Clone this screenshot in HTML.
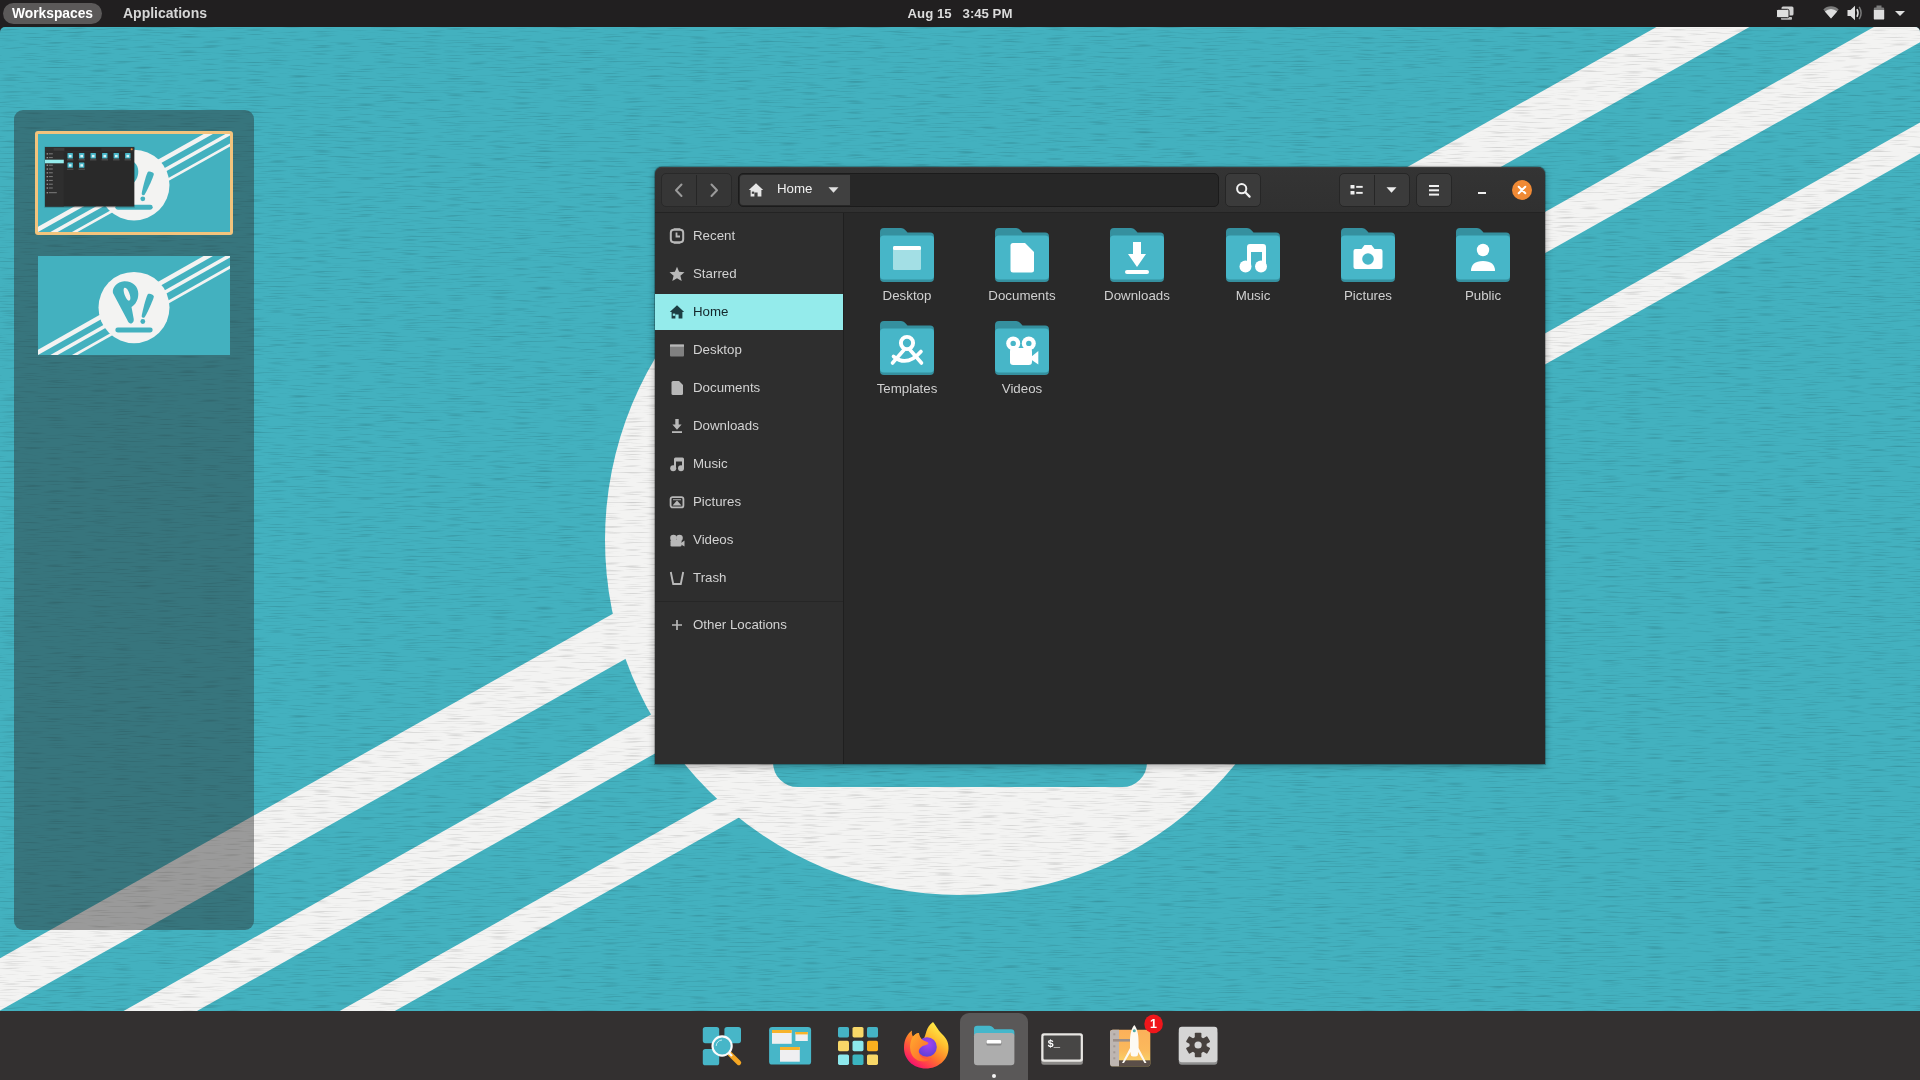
<!DOCTYPE html>
<html lang="en"><head><meta charset="utf-8"><title>Pop!_OS Desktop - Files</title>
<style>
*{box-sizing:border-box}
html,body{margin:0;padding:0}
body{width:1920px;height:1080px;overflow:hidden;position:relative;background:#211f20;font-family:"Liberation Sans",sans-serif;font-size:13.3px;color:#d2d2d2}
.abs{position:absolute}
#topbar{position:absolute;left:0;top:0;width:1920px;height:27px;background:#211f20;font-weight:700}
#ws,#apps,#clock,.fl,.srow span,.gt{will-change:transform}
#ws{position:absolute;left:3px;top:3px;width:99px;height:21px;border-radius:10.5px;background:#5b5959;color:#fff;font-size:13.8px;line-height:21px;text-align:center}
#apps{position:absolute;left:123px;top:3px;font-size:14px;line-height:21px;color:#d6d6d6}
#clock{position:absolute;left:860px;width:200px;top:3px;text-align:center;font-size:13.2px;line-height:21px;color:#dcdcdc;white-space:pre}
#wall{position:absolute;left:0;top:27px;width:1920px;height:984px;border-radius:5px 5px 0 0;overflow:hidden}
#wspanel{position:absolute;left:14px;top:110px;width:240px;height:820px;border-radius:9px;background:rgba(42,40,40,.44)}
#dock{position:absolute;left:0;top:1011px;width:1920px;height:69px;background:#333030}
#win{position:absolute;left:655px;top:167px;width:890px;height:597px;background:#292929;border-radius:7px 7px 0 0;box-shadow:0 0 0 1px rgba(0,0,0,.22),0 2px 7px rgba(0,0,0,.33)}
#hdr{position:absolute;left:0;top:0;width:890px;height:46px;background:linear-gradient(#343434,#303030);border-radius:7px 7px 0 0;border-bottom:1px solid #232323;box-shadow:inset 0 1px 0 rgba(255,255,255,.06)}
.btn{position:absolute;top:6px;height:34px;background:#3b3b3b;border:1px solid #262626;border-radius:5px}
#side{position:absolute;left:0;top:46px;width:189px;height:551px;background:#2e2e2e;border-right:1px solid #1f1f1f}
.srow{position:absolute;left:0;width:188px;height:18px;line-height:18px;white-space:nowrap}
.srow .si{position:absolute;left:14px;top:1px}
.srow span{position:absolute;left:38px;top:0}
.fi{position:absolute}
.fl{position:absolute;width:120px;text-align:center;line-height:16px;color:#d0d0d0;white-space:nowrap}
</style></head><body>
<svg width="0" height="0" style="position:absolute">
<symbol id="wp" viewBox="0 0 1920 1080" preserveAspectRatio="none">
<rect width="1920" height="1080" fill="#43b1bf"/>
<g fill="#f3f3f2">
<polygon points="-20.0,969.5 1940.0,-132.4 1940.0,-80.1 -20.0,1021.8"/>
<polygon points="-20.0,1091.7 1940.0,-10.2 1940.0,31.1 -20.0,1133.0"/>
<polygon points="-20.0,1213.2 1940.0,111.3 1940.0,142.3 -20.0,1244.2"/>
<circle cx="960" cy="540" r="355"/>
</g>
<g fill="#43b1bf">
<rect x="773" y="738" width="374" height="49" rx="24.5"/>
<path fill-rule="evenodd" d="M749,392 C742,340 790,285 862,279 C950,276 1003,335 1003,402 C1003,465 975,510 935,534 L957,650 C962,685 940,700 924,697 C908,694 900,680 893,662 L752,400 Z M866,343 C850,349 856,385 868,418 C880,452 900,478 915,470 C930,462 924,425 912,395 C900,363 882,337 866,343 Z"/>
<path d="M1098,408 C1112,396 1150,408 1158,426 C1163,440 1090,600 1066,636 C1058,646 1036,640 1037,626 C1040,590 1085,420 1098,408 Z"/>
<circle cx="1048" cy="678" r="24"/>
</g>
</symbol></svg>

<svg id="wall" viewBox="0 27 1920 984" preserveAspectRatio="none"><defs><filter id="tex" x="0" y="0" width="100%" height="100%" color-interpolation-filters="sRGB"><feTurbulence type="fractalNoise" baseFrequency="0.045 0.8" numOctaves="1" seed="7"/><feColorMatrix type="matrix" values="0 0 0 0 0  0 0 0 0 0  0 0 0 0 0  2 0 0 0 -1.05"/></filter></defs><use href="#wp" x="0" y="0" width="1920" height="1080"/><rect x="0" y="27" width="1920" height="984" filter="url(#tex)" opacity=".24"/></svg>

<div id="topbar">
<div id="ws">Workspaces</div>
<div id="apps">Applications</div>
<div id="clock">Aug 15   3:45 PM</div>

<svg class="abs" style="left:1776px;top:6px" width="18" height="15" viewBox="0 0 18 15"><rect x="5.5" y="0.5" width="12" height="9" rx="1.5" fill="#d0d0d0"/><rect x="5" y="11" width="11" height="2.8" rx=".8" fill="#bdbdbd"/><rect x="0.5" y="3.3" width="12.5" height="8.4" rx="1.5" fill="#dedede" stroke="#211f20" stroke-width="1"/></svg>
<svg class="abs" style="left:1823px;top:6px" width="16" height="13" viewBox="0 0 16 13"><path d="M8,12.5 L0.3,3.6 Q3.5,0.3 8,0.3 Q12.5,0.3 15.7,3.6 Z" fill="#7c7c7c"/><path d="M8,12.5 L1.9,5.4 Q4.5,2.9 8,2.9 Q11.5,2.9 14.1,5.4 Z" fill="#dedede"/></svg>
<svg class="abs" style="left:1847px;top:5px" width="17" height="16" viewBox="0 0 17 16"><path d="M0.5,5 L3.5,5 L8,0.8 L8,15.2 L3.5,11 L0.5,11 Z" fill="#dedede"/><path d="M10,4.2 Q12,8 10,11.8" fill="none" stroke="#dedede" stroke-width="1.5"/><path d="M12.2,1.8 Q16,8 12.2,14.2" fill="none" stroke="#7c7c7c" stroke-width="1.5"/></svg>
<svg class="abs" style="left:1873px;top:5px" width="12" height="15" viewBox="0 0 12 15"><path d="M3.5,0.5 L8.5,0.5 L8.5,2.5 L10,2.5 Q11.2,2.5 11.2,3.7 L11.2,5 L0.8,5 L0.8,3.7 Q0.8,2.5 2,2.5 L3.5,2.5 Z" fill="#7c7c7c"/><path d="M0.8,5 L11.2,5 L11.2,13.4 Q11.2,14.6 10,14.6 L2,14.6 Q0.8,14.6 0.8,13.4 Z" fill="#dedede"/></svg>
<svg class="abs" style="left:1895px;top:11px" width="10" height="5" viewBox="0 0 10 5"><path d="M0,0 L10,0 L5,5 Z" fill="#dedede"/></svg>

</div>

<div id="wspanel"></div>

<div class="abs" style="left:35px;top:131px;width:198px;height:104px;border-radius:3px;background:#f3c47d"></div>
<svg class="abs" style="left:38px;top:134px" width="192" height="98" viewBox="0 27 1920 984" preserveAspectRatio="none"><use href="#wp" x="0" y="0" width="1920" height="1080"/></svg>
<svg class="abs" style="left:44.8px;top:146.5px;overflow:visible" width="89.2" height="59.6" viewBox="0 0 89.2 59.6"><rect x="-.6" y="-.3" width="90.4" height="61" fill="rgba(0,0,0,.22)"/><g><rect x="0" y="0" width="89.2" height="59.6" rx=".7" fill="#292929"/><rect x="0" y="0" width="89.2" height="4.6" rx=".7" fill="#303030"/><rect x="0" y="4.6" width="18.8" height="55" fill="#2e2e2e"/><rect x="0" y="12.7" width="18.8" height="3.6" fill="#94ebeb"/><rect x="1.6" y="6.2" width="1.4" height="1.3" fill="#9a9a9a"/><rect x="3.8" y="6.3" width="4" height="1" fill="#7d7d7d"/><rect x="1.6" y="10.0" width="1.4" height="1.3" fill="#9a9a9a"/><rect x="3.8" y="10.1" width="4" height="1" fill="#7d7d7d"/><rect x="1.6" y="17.6" width="1.4" height="1.3" fill="#9a9a9a"/><rect x="3.8" y="17.7" width="4" height="1" fill="#7d7d7d"/><rect x="1.6" y="21.4" width="1.4" height="1.3" fill="#9a9a9a"/><rect x="3.8" y="21.5" width="4" height="1" fill="#7d7d7d"/><rect x="1.6" y="25.2" width="1.4" height="1.3" fill="#9a9a9a"/><rect x="3.8" y="25.3" width="4" height="1" fill="#7d7d7d"/><rect x="1.6" y="29.0" width="1.4" height="1.3" fill="#9a9a9a"/><rect x="3.8" y="29.1" width="4" height="1" fill="#7d7d7d"/><rect x="1.6" y="32.8" width="1.4" height="1.3" fill="#9a9a9a"/><rect x="3.8" y="32.9" width="4" height="1" fill="#7d7d7d"/><rect x="1.6" y="36.6" width="1.4" height="1.3" fill="#9a9a9a"/><rect x="3.8" y="36.7" width="4" height="1" fill="#7d7d7d"/><rect x="1.6" y="40.4" width="1.4" height="1.3" fill="#9a9a9a"/><rect x="3.8" y="40.5" width="4" height="1" fill="#7d7d7d"/><rect x="1.6" y="45.1" width="1.4" height="1.3" fill="#9a9a9a"/><rect x="3.8" y="45.2" width="8" height="1" fill="#7d7d7d"/><rect x="22.5" y="6.1" width="5.4" height="5.4" rx=".5" fill="#47b6c8"/><rect x="23.9" y="7.8999999999999995" width="2.6" height="2.4" fill="#d9f3f6"/><rect x="22.0" y="12.399999999999999" width="6.4" height=".9" fill="#5e5e5e"/><rect x="34" y="6.1" width="5.4" height="5.4" rx=".5" fill="#47b6c8"/><rect x="35.4" y="7.8999999999999995" width="2.6" height="2.4" fill="#d9f3f6"/><rect x="33.5" y="12.399999999999999" width="6.4" height=".9" fill="#5e5e5e"/><rect x="45.5" y="6.1" width="5.4" height="5.4" rx=".5" fill="#47b6c8"/><rect x="46.9" y="7.8999999999999995" width="2.6" height="2.4" fill="#d9f3f6"/><rect x="45.0" y="12.399999999999999" width="6.4" height=".9" fill="#5e5e5e"/><rect x="57.1" y="6.1" width="5.4" height="5.4" rx=".5" fill="#47b6c8"/><rect x="58.5" y="7.8999999999999995" width="2.6" height="2.4" fill="#d9f3f6"/><rect x="56.6" y="12.399999999999999" width="6.4" height=".9" fill="#5e5e5e"/><rect x="68.6" y="6.1" width="5.4" height="5.4" rx=".5" fill="#47b6c8"/><rect x="70.0" y="7.8999999999999995" width="2.6" height="2.4" fill="#d9f3f6"/><rect x="68.1" y="12.399999999999999" width="6.4" height=".9" fill="#5e5e5e"/><rect x="80.1" y="6.1" width="5.4" height="5.4" rx=".5" fill="#47b6c8"/><rect x="81.5" y="7.8999999999999995" width="2.6" height="2.4" fill="#d9f3f6"/><rect x="79.6" y="12.399999999999999" width="6.4" height=".9" fill="#5e5e5e"/><rect x="22.5" y="15.4" width="5.4" height="5.4" rx=".5" fill="#47b6c8"/><rect x="23.9" y="17.2" width="2.6" height="2.4" fill="#d9f3f6"/><rect x="22.0" y="21.7" width="6.4" height=".9" fill="#5e5e5e"/><rect x="34" y="15.4" width="5.4" height="5.4" rx=".5" fill="#47b6c8"/><rect x="35.4" y="17.2" width="2.6" height="2.4" fill="#d9f3f6"/><rect x="33.5" y="21.7" width="6.4" height=".9" fill="#5e5e5e"/><circle cx="86.7" cy="2.3" r="1" fill="#f08a35"/><rect x="8.4" y="0.9" width="48" height="2.9" fill="#272727"/><rect x="8.4" y="0.9" width="11" height="2.9" fill="#3d3d3d"/></g></svg>
<svg class="abs" style="left:38px;top:256px" width="192" height="99" viewBox="0 27 1920 984" preserveAspectRatio="none"><use href="#wp" x="0" y="0" width="1920" height="1080"/></svg>


<div id="win">
<div id="hdr">

<div class="btn" style="left:6px;width:71px;background:#363636;border-color:#292929"></div>
<div class="abs" style="left:41px;top:8px;width:1px;height:30px;background:#262626"></div>
<svg class="abs" style="left:7px;top:7px" width="70" height="32" viewBox="0 0 70 32" fill="none" stroke="#9b9b9b" stroke-width="2" stroke-linecap="round" stroke-linejoin="round"><path d="M19.5,10.5 L14,16.2 L19.5,22"/><path d="M49.5,10.5 L55,16.2 L49.5,22"/></svg>
<div class="btn" style="left:83px;width:481px;background:#272727;border-color:#1b1b1b"></div>
<div class="abs" style="left:85px;top:8px;width:110px;height:30px;background:#404040;border-radius:3px 0 0 3px"></div>
<svg class="abs" style="left:93px;top:15px" width="16" height="16" viewBox="0 0 16 16"><path d="M8,1.2 L15.2,8 L13.4,8 L13.4,14.6 L9.6,14.6 L9.6,10.4 L6.4,10.4 L6.4,14.6 L2.6,14.6 L2.6,8 L0.8,8 Z" fill="#e6e6e6"/><rect x="3.8" y="9.6" width="2.4" height="2.2" fill="#404040"/></svg>
<div class="abs gt" style="left:122px;top:14px;line-height:16px;color:#f0f0f0">Home</div>
<svg class="abs" style="left:173px;top:20px" width="11" height="6" viewBox="0 0 11 6"><path d="M0.5,0.3 L10.5,0.3 L5.5,5.7 Z" fill="#e0e0e0"/></svg>
<div class="btn" style="left:570px;width:36px"></div>
<svg class="abs" style="left:579px;top:14px" width="18" height="18" viewBox="0 0 18 18" fill="none" stroke="#f2f2f2"><circle cx="7.7" cy="7.7" r="4.6" stroke-width="2"/><path d="M11.3,11.3 L15.6,15.6" stroke-width="2.2" stroke-linecap="round"/></svg>
<div class="btn" style="left:684px;width:71px"></div>
<div class="abs" style="left:719px;top:8px;width:1px;height:30px;background:#262626"></div>
<svg class="abs" style="left:694px;top:16px" width="16" height="14" viewBox="0 0 16 14" fill="#f0f0f0"><rect x="1.5" y="2" width="4" height="3.6" rx=".6"/><rect x="1.5" y="8" width="4" height="3.6" rx=".6"/><rect x="7.2" y="2.9" width="6.5" height="1.9"/><rect x="7.2" y="8.9" width="6.5" height="1.9"/></svg>
<svg class="abs" style="left:731px;top:20px" width="11" height="6" viewBox="0 0 11 6"><path d="M0.5,0.3 L10.5,0.3 L5.5,5.7 Z" fill="#ededed"/></svg>
<div class="btn" style="left:761px;width:36px"></div>
<svg class="abs" style="left:773px;top:17px" width="12" height="12" viewBox="0 0 12 12" fill="#f0f0f0"><rect x="1" y="1" width="10" height="2"/><rect x="1" y="5.3" width="10" height="2"/><rect x="1" y="9.6" width="10" height="2"/></svg>
<div class="abs" style="left:823px;top:25px;width:8px;height:2px;background:#efefef"></div>
<svg class="abs" style="left:857px;top:13px" width="20" height="20" viewBox="0 0 20 20"><circle cx="10" cy="10" r="10" fill="#f08a35"/><path d="M6.7,6.7 L13.3,13.3 M13.3,6.7 L6.7,13.3" stroke="#fff" stroke-width="2" stroke-linecap="round"/></svg>

</div>
<div id="side">
<div class="abs" style="left:0;top:81px;width:188px;height:36px;background:#94ebeb"></div>
<div class="abs" style="left:0;top:388px;width:188px;height:1px;background:#262626"></div>
<div class="srow" style="top:13.6px;color:#b8b8b8"><svg class="si" width="16" height="16" viewBox="0 0 16 16"><rect x="1.8" y="1.8" width="12.4" height="12.4" rx="3" fill="none" stroke="currentColor" stroke-width="2"/><path d="M7.5,4.5 V8.5 H11" fill="none" stroke="currentColor" stroke-width="1.8"/><rect x="4.5" y="0.2" width="7" height="1.6" rx=".8" fill="currentColor"/><rect x="4.5" y="14.2" width="7" height="1.6" rx=".8" fill="currentColor"/></svg><span style="color:#d2d2d2">Recent</span></div>
<div class="srow" style="top:51.6px;color:#b8b8b8"><svg class="si" width="16" height="16" viewBox="0 0 16 16"><path d="M8,0.8 L10.1,5.8 L15.5,6.2 L11.4,9.8 L12.7,15.1 L8,12.2 L3.3,15.1 L4.6,9.8 L0.5,6.2 L5.9,5.8 Z" fill="currentColor"/></svg><span style="color:#d2d2d2">Starred</span></div>
<div class="srow" style="top:89.6px;color:#1c3d42"><svg class="si" width="16" height="16" viewBox="0 0 16 16"><path d="M8,1.2 L15.2,8 L13.4,8 L13.4,14.6 L9.6,14.6 L9.6,10.4 L6.4,10.4 L6.4,14.6 L2.6,14.6 L2.6,8 L0.8,8 Z" fill="currentColor"/><rect x="3.8" y="9.6" width="2.4" height="2.2" fill="#94ebeb"/></svg><span style="color:#14262a">Home</span></div>
<div class="srow" style="top:127.6px;color:#b8b8b8"><svg class="si" width="16" height="16" viewBox="0 0 16 16"><rect x="1" y="2.5" width="14" height="12" rx="1" fill="currentColor" opacity=".6"/><rect x="1" y="2.5" width="14" height="2.2" fill="currentColor"/></svg><span style="color:#d2d2d2">Desktop</span></div>
<div class="srow" style="top:165.6px;color:#b8b8b8"><svg class="si" width="16" height="16" viewBox="0 0 16 16"><path d="M4,1 L10,1 L14,5 L14,13.5 Q14,15 12.5,15 L4,15 Q2.5,15 2.5,13.5 L2.5,2.5 Q2.5,1 4,1 Z" fill="currentColor"/></svg><span style="color:#d2d2d2">Documents</span></div>
<div class="srow" style="top:203.6px;color:#b8b8b8"><svg class="si" width="16" height="16" viewBox="0 0 16 16"><path d="M6.3,1 L9.7,1 L9.7,6.5 L12.6,6.5 L8,11.8 L3.4,6.5 L6.3,6.5 Z" fill="currentColor"/><rect x="3" y="13.2" width="10" height="1.8" fill="currentColor"/></svg><span style="color:#d2d2d2">Downloads</span></div>
<div class="srow" style="top:241.6px;color:#b8b8b8"><svg class="si" width="16" height="16" viewBox="0 0 16 16"><path d="M5,3 Q5,1.5 6.5,1.5 L13.5,1.5 Q15,1.5 15,3 L15,12 L13,12 L13,5.5 L7,5.5 L7,12 L5,12 Z" fill="currentColor"/><circle cx="4.2" cy="12.2" r="3" fill="currentColor"/><circle cx="12" cy="12.2" r="3" fill="currentColor"/></svg><span style="color:#d2d2d2">Music</span></div>
<div class="srow" style="top:279.6px;color:#b8b8b8"><svg class="si" width="16" height="16" viewBox="0 0 16 16"><rect x="1.6" y="3.1" width="12.8" height="10.3" rx="2" fill="none" stroke="currentColor" stroke-width="1.8"/><path d="M3.5,11.5 L8,6.5 L12.5,11.5 Z" fill="currentColor"/><rect x="4" y="5" width="8" height="1.3" fill="currentColor" opacity=".7"/></svg><span style="color:#d2d2d2">Pictures</span></div>
<div class="srow" style="top:317.6px;color:#b8b8b8"><svg class="si" width="16" height="16" viewBox="0 0 16 16"><circle cx="4.5" cy="6" r="3.3" fill="currentColor"/><circle cx="10.5" cy="6" r="3.3" fill="currentColor"/><rect x="1.5" y="8" width="11" height="6.5" rx="1.3" fill="currentColor"/><path d="M12,11 L15.5,8.5 L15.5,14.5 L12,12.5 Z" fill="currentColor"/></svg><span style="color:#d2d2d2">Videos</span></div>
<div class="srow" style="top:355.6px;color:#b8b8b8"><svg class="si" width="16" height="16" viewBox="0 0 16 16"><path d="M1.8,2 L4.2,14 L11.8,14 L14.2,2" fill="none" stroke="currentColor" stroke-width="1.9" stroke-linejoin="miter"/></svg><span style="color:#d2d2d2">Trash</span></div>
<div class="srow" style="top:402.6px;color:#b8b8b8"><svg class="si" width="16" height="16" viewBox="0 0 16 16"><path d="M8,3 V13 M3,8 H13" stroke="currentColor" stroke-width="1.7" fill="none"/></svg><span style="color:#d2d2d2">Other Locations</span></div>

</div>
</div>
<svg class="fi" style="left:880px;top:228px" width="54" height="54" viewBox="0 0 54 54">
<path d="M0,4 Q0,0 4,0 L21,0 Q23.5,0 25,1.8 L27.5,4.6 L50,4.6 Q54,4.6 54,8.6 L54,50 Q54,54 50,54 L4,54 Q0,54 0,50 Z" fill="#35909f"/>
<path d="M0,11.5 Q0,7.5 4,7.5 L50,7.5 Q54,7.5 54,11.5 L54,47.5 Q54,51.5 50,51.5 L4,51.5 Q0,51.5 0,47.5 Z" fill="#47b6c8"/>
<rect x="13" y="18" width="28" height="24" rx="1.5" fill="#a3dfe5"/><rect x="13" y="18" width="28" height="4" rx="1.5" fill="#fff"/>
</svg><div class="fl" style="left:847px;top:288px">Desktop</div>
<svg class="fi" style="left:995px;top:228px" width="54" height="54" viewBox="0 0 54 54">
<path d="M0,4 Q0,0 4,0 L21,0 Q23.5,0 25,1.8 L27.5,4.6 L50,4.6 Q54,4.6 54,8.6 L54,50 Q54,54 50,54 L4,54 Q0,54 0,50 Z" fill="#35909f"/>
<path d="M0,11.5 Q0,7.5 4,7.5 L50,7.5 Q54,7.5 54,11.5 L54,47.5 Q54,51.5 50,51.5 L4,51.5 Q0,51.5 0,47.5 Z" fill="#47b6c8"/>
<path d="M18,15 L30,15 L39,24 L39,42 Q39,44.5 36.5,44.5 L18,44.5 Q15.5,44.5 15.5,42 L15.5,17.5 Q15.5,15 18,15 Z" fill="#fff"/>
</svg><div class="fl" style="left:962px;top:288px">Documents</div>
<svg class="fi" style="left:1110px;top:228px" width="54" height="54" viewBox="0 0 54 54">
<path d="M0,4 Q0,0 4,0 L21,0 Q23.5,0 25,1.8 L27.5,4.6 L50,4.6 Q54,4.6 54,8.6 L54,50 Q54,54 50,54 L4,54 Q0,54 0,50 Z" fill="#35909f"/>
<path d="M0,11.5 Q0,7.5 4,7.5 L50,7.5 Q54,7.5 54,11.5 L54,47.5 Q54,51.5 50,51.5 L4,51.5 Q0,51.5 0,47.5 Z" fill="#47b6c8"/>
<path d="M23,14 L31,14 L31,26 L36,26 L27,39 L18,26 L23,26 Z" fill="#fff"/><rect x="15" y="42" width="24" height="4" rx="2" fill="#fff"/>
</svg><div class="fl" style="left:1077px;top:288px">Downloads</div>
<svg class="fi" style="left:1226px;top:228px" width="54" height="54" viewBox="0 0 54 54">
<path d="M0,4 Q0,0 4,0 L21,0 Q23.5,0 25,1.8 L27.5,4.6 L50,4.6 Q54,4.6 54,8.6 L54,50 Q54,54 50,54 L4,54 Q0,54 0,50 Z" fill="#35909f"/>
<path d="M0,11.5 Q0,7.5 4,7.5 L50,7.5 Q54,7.5 54,11.5 L54,47.5 Q54,51.5 50,51.5 L4,51.5 Q0,51.5 0,47.5 Z" fill="#47b6c8"/>
<path d="M21,19 Q21,16 24,16 L37,16 Q40,16 40,19 L40,38 L36,38 L36,24 L25,24 L25,38 L21,38 Z" fill="#fff"/><circle cx="19.5" cy="38.5" r="6" fill="#fff"/><circle cx="35" cy="38.5" r="6" fill="#fff"/>
</svg><div class="fl" style="left:1193px;top:288px">Music</div>
<svg class="fi" style="left:1341px;top:228px" width="54" height="54" viewBox="0 0 54 54">
<path d="M0,4 Q0,0 4,0 L21,0 Q23.5,0 25,1.8 L27.5,4.6 L50,4.6 Q54,4.6 54,8.6 L54,50 Q54,54 50,54 L4,54 Q0,54 0,50 Z" fill="#35909f"/>
<path d="M0,11.5 Q0,7.5 4,7.5 L50,7.5 Q54,7.5 54,11.5 L54,47.5 Q54,51.5 50,51.5 L4,51.5 Q0,51.5 0,47.5 Z" fill="#47b6c8"/>
<path d="M12.5,23 Q12.5,21 14.5,21 L20.5,21 L23.5,17 L30.5,17 L33.5,21 L39.5,21 Q41.5,21 41.5,23 L41.5,39 Q41.5,41 39.5,41 L14.5,41 Q12.5,41 12.5,39 Z" fill="#fff"/><circle cx="27" cy="31" r="5.8" fill="#47b6c8"/>
</svg><div class="fl" style="left:1308px;top:288px">Pictures</div>
<svg class="fi" style="left:1456px;top:228px" width="54" height="54" viewBox="0 0 54 54">
<path d="M0,4 Q0,0 4,0 L21,0 Q23.5,0 25,1.8 L27.5,4.6 L50,4.6 Q54,4.6 54,8.6 L54,50 Q54,54 50,54 L4,54 Q0,54 0,50 Z" fill="#35909f"/>
<path d="M0,11.5 Q0,7.5 4,7.5 L50,7.5 Q54,7.5 54,11.5 L54,47.5 Q54,51.5 50,51.5 L4,51.5 Q0,51.5 0,47.5 Z" fill="#47b6c8"/>
<circle cx="27" cy="22" r="6.2" fill="#fff"/><path d="M15,43 Q15,33 27,33 Q39,33 39,43 Z" fill="#fff"/>
</svg><div class="fl" style="left:1423px;top:288px">Public</div>
<svg class="fi" style="left:880px;top:321px" width="54" height="54" viewBox="0 0 54 54">
<path d="M0,4 Q0,0 4,0 L21,0 Q23.5,0 25,1.8 L27.5,4.6 L50,4.6 Q54,4.6 54,8.6 L54,50 Q54,54 50,54 L4,54 Q0,54 0,50 Z" fill="#35909f"/>
<path d="M0,11.5 Q0,7.5 4,7.5 L50,7.5 Q54,7.5 54,11.5 L54,47.5 Q54,51.5 50,51.5 L4,51.5 Q0,51.5 0,47.5 Z" fill="#47b6c8"/>
<g fill="none" stroke="#fff" stroke-linecap="round"><circle cx="27" cy="22" r="6.1" stroke-width="3.9"/><path d="M24.3,28.5 L12.5,42" stroke-width="3.6"/><path d="M29.7,28.5 L41.5,42" stroke-width="3.6"/><path d="M13.5,35.5 Q27,46.5 41,30.5" stroke-width="3.6"/></g>
</svg><div class="fl" style="left:847px;top:381px">Templates</div>
<svg class="fi" style="left:995px;top:321px" width="54" height="54" viewBox="0 0 54 54">
<path d="M0,4 Q0,0 4,0 L21,0 Q23.5,0 25,1.8 L27.5,4.6 L50,4.6 Q54,4.6 54,8.6 L54,50 Q54,54 50,54 L4,54 Q0,54 0,50 Z" fill="#35909f"/>
<path d="M0,11.5 Q0,7.5 4,7.5 L50,7.5 Q54,7.5 54,11.5 L54,47.5 Q54,51.5 50,51.5 L4,51.5 Q0,51.5 0,47.5 Z" fill="#47b6c8"/>
<circle cx="18.2" cy="22.4" r="7" fill="#fff"/><circle cx="33.8" cy="22.4" r="7" fill="#fff"/><circle cx="18.2" cy="22.4" r="2.7" fill="#47b6c8"/><circle cx="33.8" cy="22.4" r="2.7" fill="#47b6c8"/><rect x="15" y="27" width="22" height="17" rx="3.2" fill="#fff"/><path d="M36,36 L43.3,30 L43.3,43.5 L36,38.5 Z" fill="#fff"/>
</svg><div class="fl" style="left:962px;top:381px">Videos</div>


<div id="dock">

<div class="abs" style="left:960px;top:1.5px;width:68px;height:80px;border-radius:9px;background:#5a5858"></div>
<div class="abs" style="left:992px;top:63px;width:4px;height:4px;border-radius:2px;background:#f5f5f5"></div>

<svg class="abs" style="left:698px;top:11px" width="48" height="48" viewBox="698 1022 48 48">
<g fill="#47b6c8"><rect x="702.8" y="1027" width="16.4" height="16.2" rx="2.6"/><rect x="724.4" y="1027" width="16.6" height="16.2" rx="2.6"/><rect x="702.8" y="1049" width="16.4" height="16.3" rx="2.6"/></g>
<path d="M730,1054 L738.8,1062.8" stroke="#f5a623" stroke-width="4.8" stroke-linecap="round"/>
<path d="M729,1053 L732,1056" stroke="#f5f5f5" stroke-width="2.4"/>
<circle cx="722.1" cy="1046" r="9.6" fill="#47b6c8" stroke="#fbfbfb" stroke-width="2.1"/>
<path d="M716.2,1046 A6,6 0 0 1 722,1040" fill="none" stroke="#bfeaf0" stroke-width="1"/>
</svg>

<svg class="abs" style="left:766px;top:11px" width="48" height="48" viewBox="766 1022 48 48">
<rect x="769.1" y="1027" width="42" height="37.6" rx="3.2" fill="#47b6c8"/>
<rect x="772" y="1030" width="19.7" height="13.8" fill="#efeff1"/><rect x="772" y="1030" width="19.7" height="3" fill="#f7b32b"/>
<rect x="795.4" y="1032" width="12.4" height="9" fill="#efeff1"/><rect x="795.4" y="1032" width="12.4" height="2.4" fill="#f7b32b"/>
<rect x="780" y="1047" width="19.8" height="14.7" fill="#efeff1"/><rect x="780" y="1047" width="19.8" height="3" fill="#f7b32b"/>
</svg>

<svg class="abs" style="left:834px;top:11px" width="48" height="48" viewBox="834 1022 48 48">
<g>
<rect x="838" y="1027" width="11" height="10.4" rx="1.6" fill="#45b3c5"/><rect x="852.5" y="1027" width="11" height="10.4" rx="1.6" fill="#f8d768"/><rect x="867" y="1027" width="11" height="10.4" rx="1.6" fill="#45b3c5"/>
<rect x="838" y="1040.8" width="11" height="10.4" rx="1.6" fill="#f8d768"/><rect x="852.5" y="1040.8" width="11" height="10.4" rx="1.6" fill="#8de8ec"/><rect x="867" y="1040.8" width="11" height="10.4" rx="1.6" fill="#fbb01f"/>
<rect x="838" y="1054.5" width="11" height="10.4" rx="1.6" fill="#8de8ec"/><rect x="852.5" y="1054.5" width="11" height="10.4" rx="1.6" fill="#3bb4c0"/><rect x="867" y="1054.5" width="11" height="10.4" rx="1.6" fill="#f8d768"/>
</g></svg>

<svg class="abs" style="left:902px;top:9px" width="48" height="50" viewBox="902 1020 48 50">
<defs>
<linearGradient id="ffa" x1="0.85" y1="0.1" x2="0.25" y2="0.95"><stop offset="0" stop-color="#fff04a"/><stop offset=".3" stop-color="#ffbd2f"/><stop offset=".6" stop-color="#ff7a2a"/><stop offset=".85" stop-color="#ff3a4e"/><stop offset="1" stop-color="#f5156c"/></linearGradient>
<radialGradient id="ffb" cx=".55" cy=".35" r=".7"><stop offset="0" stop-color="#a743f0"/><stop offset="1" stop-color="#5a3fd6"/></radialGradient>
<linearGradient id="ffc" x1="0" y1="0" x2="1" y2="1"><stop offset="0" stop-color="#ffb02e"/><stop offset="1" stop-color="#ff5a2c"/></linearGradient>
</defs>
<path d="M933,1022 C937,1027 938,1030 941,1033 C945,1037 949,1041 948.5,1049 C948,1060 938,1068.5 926,1068.5 C913,1068.5 903.500,1059 904,1047 C904.300,1040 906.500,1034.500 912,1030.500 C911.500,1033 912,1035 913,1036.500 C915,1034 917.500,1033 919,1033 C919,1036 920.500,1039 923,1040 C927,1034 925,1028 933,1022 Z" fill="url(#ffa)"/>
<circle cx="927" cy="1047" r="9.8" fill="url(#ffb)"/>
<path d="M913,1036.500 C915,1034 917.500,1033 919,1033 C919,1036 921,1040 926,1041.500 C929,1042.500 929,1044 926,1045 C921,1046 918,1049 919,1053 C920,1058 926,1060.500 932,1058 C926,1064 915,1062 911.500,1054 C909,1048 910,1041 913,1036.500 Z" fill="url(#ffc)"/>
</svg>

<svg class="abs" style="left:970px;top:11px" width="48" height="48" viewBox="970 1022 48 48">
<path d="M974,1029 Q974,1025.700 977.300,1025.700 L989.500,1025.700 Q991.500,1025.700 992.800,1027.200 L994.600,1029.300 L1011,1029.300 Q1014.400,1029.300 1014.400,1032.600 L1014.400,1035.500 L974,1035.500 Z" fill="#45b7cb"/>
<rect x="974" y="1033" width="40.400" height="32.200" rx="3.300" fill="#adadad"/>
<rect x="986.300" y="1040" width="15.200" height="5.600" rx="1.500" fill="#868686"/>
<rect x="986.600" y="1040" width="14.600" height="3.600" rx="1.200" fill="#ffffff"/>
</svg>

<svg class="abs gt" style="left:1038px;top:11px" width="48" height="48" viewBox="1038 1022 48 48">
<rect x="1041.300" y="1036" width="41.600" height="28.700" rx="2.500" fill="#8d8b89"/>
<rect x="1041.300" y="1033.300" width="41.600" height="28.400" rx="2.500" fill="#e9e7e4"/>
<rect x="1043.500" y="1035.500" width="37.200" height="24" rx="1" fill="#474645"/>
<text x="1047.500" y="1046.600" font-family="Liberation Mono, monospace" font-size="10.500" font-weight="700" fill="#ffffff">$_</text>
</svg>

<svg class="abs gt" style="left:1106px;top:1px" width="60" height="60" viewBox="1106 1012 60 60">
<defs><linearGradient id="shg" x1="0" y1="0" x2="0" y2="1"><stop offset="0" stop-color="#fbb05a"/><stop offset=".55" stop-color="#fbb95c"/><stop offset="1" stop-color="#f9dc6e"/></linearGradient><clipPath id="shc"><rect x="1110" y="1029.700" width="40.300" height="36.500" rx="2.800"/></clipPath></defs>
<g clip-path="url(#shc)">
<rect x="1110" y="1029" width="41" height="38" fill="url(#shg)"/>
<rect x="1110" y="1060.300" width="41" height="7" fill="#5b4f49"/>
<rect x="1110" y="1029" width="9" height="38" fill="#beb6b1"/>
<rect x="1113" y="1039" width="17" height="2.600" fill="#9c8f88"/>
<g fill="#a39a95"><rect x="1113.300" y="1033.300" width="2" height="2"/><rect x="1113.300" y="1045.300" width="2" height="2"/><rect x="1113.300" y="1051.300" width="2" height="2"/><rect x="1113.300" y="1057.300" width="2" height="2"/></g>
</g>
<path d="M1134.300,1025 C1137.500,1029 1138.600,1035 1138.600,1042 L1138.600,1048 L1146.500,1063 L1144.500,1063 L1138,1052 L1138,1054 Q1138,1056.500 1135.500,1056.500 L1133,1056.500 Q1130.600,1056.500 1130.600,1054 L1130.600,1052 L1124,1063 L1122,1063 L1130,1048 L1130,1042 C1130,1035 1131,1029 1134.300,1025 Z" fill="#fdfaf3"/>
<circle cx="1134.300" cy="1030.800" r="1.500" fill="#4fa9a6"/>
<circle cx="1153.600" cy="1023.900" r="9.300" fill="#f0161b"/>
<text x="1153.600" y="1028.300" text-anchor="middle" font-family="Liberation Sans, sans-serif" font-size="12.500" font-weight="700" fill="#ffffff">1</text>
</svg>

<svg class="abs" style="left:1174px;top:11px" width="48" height="48" viewBox="1174 1022 48 48">
<rect x="1178.800" y="1030" width="38.600" height="34.800" rx="3" fill="#8f8f8f"/>
<rect x="1178.800" y="1026.800" width="38.600" height="35.400" rx="3" fill="#d5d5d5"/>
<g transform="translate(1198.100,1045)" fill="#47413e">
<circle r="8.600"/>
<g id="tooth"><rect x="-3.300" y="-12.200" width="6.600" height="6" rx=".8"/></g>
<use href="#tooth" transform="rotate(60)"/><use href="#tooth" transform="rotate(120)"/><use href="#tooth" transform="rotate(180)"/><use href="#tooth" transform="rotate(240)"/><use href="#tooth" transform="rotate(300)"/>
<circle r="3.600" fill="#d5d5d5"/>
</g>
</svg>

</div>
</body></html>
